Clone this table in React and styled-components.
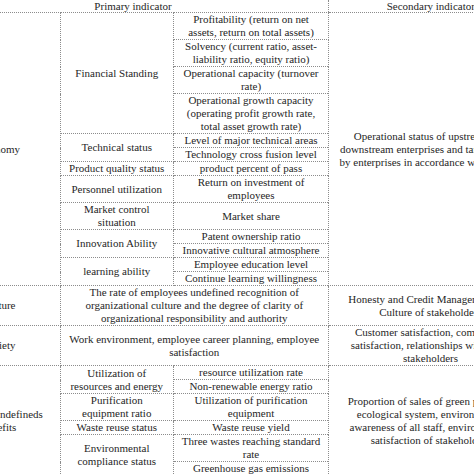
import React from "react";
import styled, { createGlobalStyle } from "styled-components";

const Global = createGlobalStyle`
  html, body {
    margin: 0;
    padding: 0;
    background: #ffffff;
    overflow: hidden;
  }
  body {
    width: 474px;
    height: 474px;
  }
`;

const Frame = styled.div`
  width: 474px;
  height: 474px;
  overflow: hidden;
  background: #fff;
`;

const Table = styled.table`
  margin-left: -62.5px;
  border-collapse: collapse;
  table-layout: fixed;
  width: 594.5px;
  font-family: "Liberation Serif", "Times New Roman", serif;
  font-size: 11px;
  color: #262626;
`;

const Col = styled.col`
  width: ${(p) => p.$w}px;
`;

const HeadCell = styled.th`
  font-weight: normal;
  line-height: 12px;
  height: 12px;
  padding: 0;
  text-align: center;
  white-space: nowrap;
  border-bottom: 1px dotted #8c8c8c;
  border-left: ${(p) => (p.$divider ? "1px dotted #8c8c8c" : "none")};
`;

const Cell = styled.td`
  padding: 0;
  line-height: 13px;
  text-align: center;
  vertical-align: middle;
  white-space: nowrap;
  border: 1px dotted #8c8c8c;
`;

const Lines = ({ lines }) =>
  lines.map((l, i) => (
    <React.Fragment key={i}>
      {i > 0 && <br />}
      {l}
    </React.Fragment>
  ));

const T = ({ lines, ...rest }) => (
  <Cell {...rest}>
    <Lines lines={lines} />
  </Cell>
);

export default function App() {
  return (
    <Frame>
      <Global />
      <Table>
        <colgroup>
          <Col $w={122} />
          <Col $w={113.5} />
          <Col $w={155} />
          <Col $w={204} />
        </colgroup>
        <thead>
          <tr>
            <HeadCell colSpan={3}>Primary indicator</HeadCell>
            <HeadCell $divider>Secondary indicator</HeadCell>
          </tr>
        </thead>
        <tbody>
          <tr>
            <T rowSpan={13} lines={["Economy"]} />
            <T rowSpan={4} lines={["Financial Standing"]} />
            <T lines={["Profitability (return on net", "assets, return on total assets)"]} />
            <T
              rowSpan={13}
              lines={[
                "Operational status of upstream and",
                "downstream enterprises and targets taken",
                "by enterprises in accordance with the law",
              ]}
            />
          </tr>
          <tr>
            <T lines={["Solvency (current ratio, asset-", "liability ratio, equity ratio)"]} />
          </tr>
          <tr>
            <T lines={["Operational capacity (turnover", "rate)"]} />
          </tr>
          <tr>
            <T
              lines={[
                "Operational growth capacity",
                "(operating profit growth rate,",
                "total asset growth rate)",
              ]}
            />
          </tr>
          <tr>
            <T rowSpan={2} lines={["Technical status"]} />
            <T lines={["Level of major technical areas"]} />
          </tr>
          <tr>
            <T lines={["Technology cross fusion level"]} />
          </tr>
          <tr>
            <T lines={["Product quality status"]} />
            <T lines={["product percent of pass"]} />
          </tr>
          <tr>
            <T lines={["Personnel utilization"]} />
            <T lines={["Return on investment of", "employees"]} />
          </tr>
          <tr>
            <T lines={["Market control", "situation"]} />
            <T lines={["Market share"]} />
          </tr>
          <tr>
            <T rowSpan={2} lines={["Innovation Ability"]} />
            <T lines={["Patent ownership ratio"]} />
          </tr>
          <tr>
            <T lines={["Innovative cultural atmosphere"]} />
          </tr>
          <tr>
            <T rowSpan={2} lines={["learning ability"]} />
            <T lines={["Employee education level"]} />
          </tr>
          <tr>
            <T lines={["Continue learning willingness"]} />
          </tr>
          <tr>
            <T lines={["Culture"]} />
            <T
              colSpan={2}
              lines={[
                "The rate of employees undefined recognition of",
                "organizational culture and the degree of clarity of",
                "organizational responsibility and authority",
              ]}
            />
            <T lines={["Honesty and Credit Management and", "Culture of stakeholders"]} />
          </tr>
          <tr>
            <T lines={["Society"]} />
            <T
              colSpan={2}
              lines={["Work environment, employee career planning, employee", "satisfaction"]}
            />
            <T
              lines={[
                "Customer satisfaction, community",
                "satisfaction, relationships with other",
                "stakeholders",
              ]}
            />
          </tr>
          <tr>
            <T rowSpan={6} lines={["Ecology undefineds", "benefits"]} />
            <T rowSpan={2} lines={["Utilization of", "resources and energy"]} />
            <T lines={["resource utilization rate"]} />
            <T
              rowSpan={6}
              lines={[
                "Proportion of sales of green products,",
                "ecological system, environmental",
                "awareness of all staff, environmental",
                "satisfaction of stakeholders",
              ]}
            />
          </tr>
          <tr>
            <T lines={["Non-renewable energy ratio"]} />
          </tr>
          <tr>
            <T lines={["Purification", "equipment ratio"]} />
            <T lines={["Utilization of purification", "equipment"]} />
          </tr>
          <tr>
            <T lines={["Waste reuse status"]} />
            <T lines={["Waste reuse yield"]} />
          </tr>
          <tr>
            <T rowSpan={2} lines={["Environmental", "compliance status"]} />
            <T lines={["Three wastes reaching standard", "rate"]} />
          </tr>
          <tr>
            <T lines={["Greenhouse gas emissions"]} />
          </tr>
        </tbody>
      </Table>
    </Frame>
  );
}
